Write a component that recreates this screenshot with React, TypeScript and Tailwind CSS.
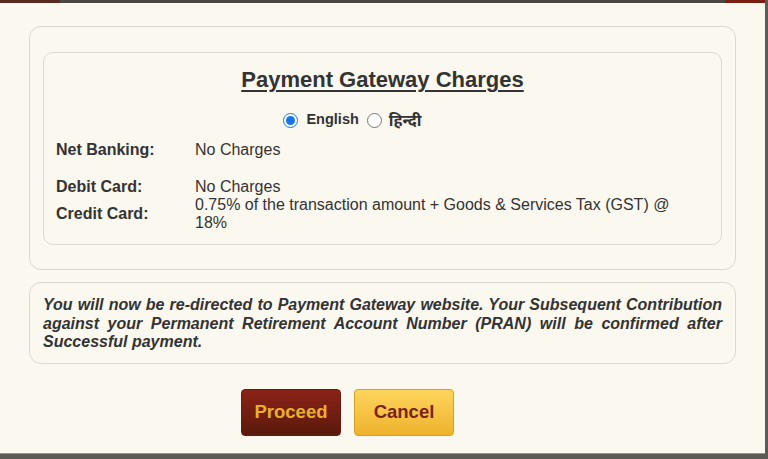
import React, { useState } from "react";

const Row = ({ label, children }: { label: string; children: React.ReactNode }) => (
  <div className="flex items-center leading-[18px]">
    <div className="w-[139px] shrink-0 font-bold">{label}</div>
    <div className="pr-[30px]">{children}</div>
  </div>
);

export default function App() {
  const [lang, setLang] = useState("en");

  return (
    <div
      className="h-[459px] w-[768px] overflow-hidden bg-[#5b5a55] text-[#333]"
      style={{ fontFamily: '"Liberation Sans", Arial, "Noto Sans", sans-serif' }}
    >
      <div className="flex h-[3px] w-[765px]">
        <div className="w-[60px] bg-[#5a2a22]" />
        <div className="flex-1 bg-[#4a4744]" />
        <div className="w-[40px] bg-[#7a1f12]" />
      </div>
      <div className="flex h-[451px] w-[765px] flex-col border-b border-[#b98a80] bg-[#fbf8f0] px-[29px] pt-[23px]">
        {/* charges panel */}
        <div className="rounded-[12px] border border-[#dcd8d0] px-[13px] pt-[25px] pb-[24px]">
          <div className="rounded-[10px] border border-[#dcd8d0] px-[12px] pt-[13px] pb-[12px] text-[16px]">
            <h2 className="text-center text-[22px] font-bold leading-[28px] text-[#333] underline underline-offset-[3px] decoration-[1.5px]">
              Payment Gateway Charges
            </h2>
            <div className="mt-[14px] flex items-center justify-center pr-[60px] text-[14.5px]">
              <label className="flex items-center gap-[8px]">
                <input
                  type="radio"
                  name="lang"
                  checked={lang === "en"}
                  onChange={() => setLang("en")}
                  className="m-0 h-[15px] w-[15px] accent-[#1a73e8]"
                />
                <span className="font-bold">English</span>
              </label>
              <label className="ml-[8px] flex items-center gap-[7px]">
                <input
                  type="radio"
                  name="lang"
                  checked={lang === "hi"}
                  onChange={() => setLang("hi")}
                  className="m-0 h-[15px] w-[15px]"
                />
                <span
                  className="text-[16px] font-bold"
                  style={{ fontFamily: '"Noto Sans", "Noto Sans Devanagari", sans-serif' }}
                >
                  हिन्दी
                </span>
              </label>
            </div>
            <div className="mt-[9px] space-y-[19px]">
              <Row label="Net Banking:">No Charges</Row>
              <div>
                <Row label="Debit Card:">No Charges</Row>
                <Row label="Credit Card:">
                  0.75% of the transaction amount + Goods &amp; Services Tax (GST) @ 18%
                </Row>
              </div>
            </div>
          </div>
        </div>

        {/* notice */}
        <div className="mt-[12px] rounded-[12px] border border-[#dcd8d0] px-[13px] pt-[13px] pb-[11px]">
          <p className="text-justify text-[16px] font-bold italic leading-[18.5px] text-[#333]">
            You will now be re-directed to Payment Gateway website. Your Subsequent Contribution
            against your Permanent Retirement Account Number (PRAN) will be confirmed after
            Successful payment.
          </p>
        </div>

        {/* actions */}
        <div className="mt-[25px] flex gap-[13px] pl-[212px]">
          <button className="h-[47px] w-[100px] rounded-[4px] border border-[#6a1a10] bg-gradient-to-b from-[#8c2218] to-[#5a1a0c] text-[18.5px] font-bold text-[#e9b02e]">
            Proceed
          </button>
          <button className="h-[47px] w-[100px] rounded-[4px] border border-[#d9a020] bg-gradient-to-b from-[#fed55c] to-[#eeb22a] text-[18.5px] font-bold text-[#7a2216]">
            Cancel
          </button>
        </div>
      </div>
    </div>
  );
}
